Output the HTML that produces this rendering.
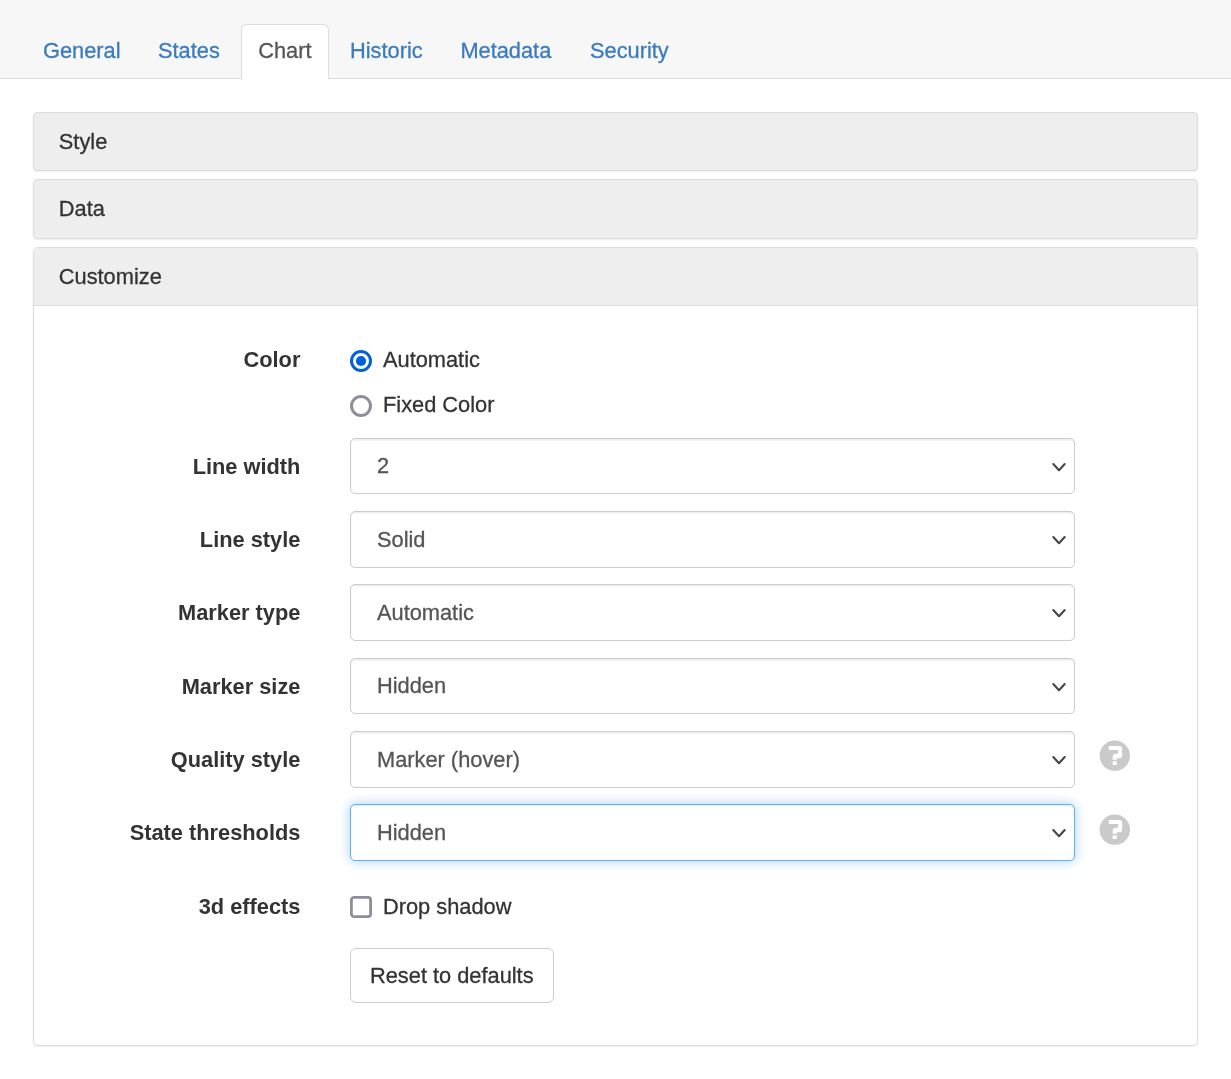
<!DOCTYPE html>
<html>
<head>
<meta charset="utf-8">
<style>
*{box-sizing:border-box;}
html,body{margin:0;padding:0;width:1231px;height:1079px;overflow:hidden;background:#fff;}
body{font-family:"Liberation Sans",sans-serif;font-size:21.8px;color:#333;position:relative;-webkit-text-stroke:0.3px currentColor;}
.abs{position:absolute;}
.tabbar{position:absolute;left:0;top:0;width:1231px;height:79px;background:#f7f7f7;border-bottom:1px solid #ddd;}
.tab{position:absolute;top:0;line-height:1;color:#3a7bbf;white-space:nowrap;}
.tab-active{position:absolute;left:241px;top:24px;width:88px;height:55px;background:#fff;border:1px solid #ddd;border-bottom:none;border-radius:6px 6px 0 0;}
.panel{position:absolute;left:33px;width:1165px;border:1px solid #ddd;border-radius:5px;background:#fff;box-shadow:0 1px 1.5px rgba(0,0,0,.07);}
.ph{background:#eee;border-radius:4px;}
.ptitle{position:absolute;left:24.8px;line-height:1;color:#333;white-space:nowrap;}
.lbl{position:absolute;right:930.6px;-webkit-text-stroke:0;font-weight:bold;line-height:1;white-space:nowrap;color:#333;}
.txt{position:absolute;line-height:1;white-space:nowrap;color:#333;}
.sel{position:absolute;left:350px;width:725px;height:56px;border:1px solid #ccc;border-radius:5px;background:#fff;box-shadow:inset 0 1.5px 1.5px rgba(0,0,0,.08);}
.sel .v{position:absolute;left:26px;top:0;line-height:54px;color:#555;white-space:nowrap;}
.sel svg{position:absolute;left:694px;top:16px;}
.sel[style*="57px"] .v{top:0.6px;}
.focus{border-color:#66afe9;box-shadow:inset 0 1px 2px rgba(0,0,0,.09),0 0 12px rgba(102,175,233,.6);}
.help{position:absolute;left:1094px;}
</style>
</head>
<body><div style="position:absolute;left:0;top:0;width:1231px;height:1079px;will-change:transform;">
<div class="tabbar"></div>
<div class="tab-active"></div>
<div class="tab" style="left:43px;top:40.4px;">General</div>
<div class="tab" style="left:158px;top:40.4px;">States</div>
<div class="tab" style="left:258.2px;top:40.4px;color:#555;">Chart</div>
<div class="tab" style="left:350px;top:40.4px;">Historic</div>
<div class="tab" style="left:460.4px;top:40.4px;">Metadata</div>
<div class="tab" style="left:590px;top:40.4px;">Security</div>

<div class="panel ph" style="top:112px;height:59px;"><div class="ptitle" style="top:17.8px;">Style</div></div>
<div class="panel ph" style="top:179px;height:60px;"><div class="ptitle" style="top:17.8px;">Data</div></div>
<div class="panel" style="top:247px;height:799px;">
  <div class="ph" style="position:absolute;left:0;top:0;right:0;height:58px;border-bottom:1px solid #ddd;border-radius:4px 4px 0 0;"><div class="ptitle" style="top:17.8px;">Customize</div></div>
</div>

<div class="lbl" style="top:349px;">Color</div>
<svg class="abs" style="left:350px;top:350px;" width="22" height="22" viewBox="0 0 22 22"><circle cx="11" cy="11" r="9.5" fill="#fff" stroke="#005fdc" stroke-width="3"/><circle cx="11" cy="11" r="5.1" fill="#0060de"/></svg>
<div class="txt" style="left:383px;top:349px;">Automatic</div>
<svg class="abs" style="left:350px;top:395px;" width="22" height="22" viewBox="0 0 22 22"><circle cx="11" cy="11" r="9.5" fill="#fff" stroke="#8f8d9b" stroke-width="3"/></svg>
<div class="txt" style="left:383px;top:394px;">Fixed Color</div>

<div class="lbl" style="top:456px;">Line width</div>
<div class="sel" style="top:438px;"><span class="v">2</span><svg width="28" height="24" viewBox="0 0 28 24"><path d="M8.3 9 L14 15.2 L19.7 9" fill="none" stroke="#474747" stroke-width="2.1" stroke-linecap="round" stroke-linejoin="round"/></svg></div>
<div class="lbl" style="top:529px;">Line style</div>
<div class="sel" style="top:511px;height:57px;"><span class="v">Solid</span><svg width="28" height="24" viewBox="0 0 28 24"><path d="M8.3 9 L14 15.2 L19.7 9" fill="none" stroke="#474747" stroke-width="2.1" stroke-linecap="round" stroke-linejoin="round"/></svg></div>
<div class="lbl" style="top:602px;">Marker type</div>
<div class="sel" style="top:584px;height:57px;"><span class="v">Automatic</span><svg width="28" height="24" viewBox="0 0 28 24"><path d="M8.3 9 L14 15.2 L19.7 9" fill="none" stroke="#474747" stroke-width="2.1" stroke-linecap="round" stroke-linejoin="round"/></svg></div>
<div class="lbl" style="top:676px;">Marker size</div>
<div class="sel" style="top:658px;"><span class="v">Hidden</span><svg width="28" height="24" viewBox="0 0 28 24"><path d="M8.3 9 L14 15.2 L19.7 9" fill="none" stroke="#474747" stroke-width="2.1" stroke-linecap="round" stroke-linejoin="round"/></svg></div>
<div class="lbl" style="top:749px;">Quality style</div>
<div class="sel" style="top:731px;height:57px;"><span class="v">Marker (hover)</span><svg width="28" height="24" viewBox="0 0 28 24"><path d="M8.3 9 L14 15.2 L19.7 9" fill="none" stroke="#474747" stroke-width="2.1" stroke-linecap="round" stroke-linejoin="round"/></svg></div>
<svg class="help" style="top:736px;" width="40" height="40" viewBox="0 0 40 40"><circle cx="20.8" cy="19.65" r="15.2" fill="#cacaca"/><path d="M14.8 10 H25.3 Q28.1 10 28.1 12.8 V19.4 Q28.1 22.2 25.3 22.2 H22.8 V23.7 H18.7 V20.9 Q18.7 17.8 21.8 17.8 H24.1 V14.1 H14.8 Z M18.7 25.2 H22.8 V28.9 H18.7 Z" fill="#fff"/></svg>
<div class="lbl" style="top:822px;">State thresholds</div>
<div class="sel focus" style="top:804px;height:57px;"><span class="v">Hidden</span><svg width="28" height="24" viewBox="0 0 28 24"><path d="M8.3 9 L14 15.2 L19.7 9" fill="none" stroke="#474747" stroke-width="2.1" stroke-linecap="round" stroke-linejoin="round"/></svg></div>
<svg class="help" style="top:810px;" width="40" height="40" viewBox="0 0 40 40"><circle cx="20.8" cy="19.65" r="15.2" fill="#cacaca"/><path d="M14.8 10 H25.3 Q28.1 10 28.1 12.8 V19.4 Q28.1 22.2 25.3 22.2 H22.8 V23.7 H18.7 V20.9 Q18.7 17.8 21.8 17.8 H24.1 V14.1 H14.8 Z M18.7 25.2 H22.8 V28.9 H18.7 Z" fill="#fff"/></svg>

<div class="lbl" style="top:896px;">3d effects</div>
<svg class="abs" style="left:350px;top:896px;" width="22" height="22" viewBox="0 0 22 22"><rect x="1.4" y="1.4" width="19.2" height="19.2" rx="2.6" fill="#fff" stroke="#8f8d9b" stroke-width="2.8"/></svg>
<div class="txt" style="left:383px;top:896px;">Drop shadow</div>

<div class="abs" style="left:350px;top:948px;width:204px;height:55px;border:1px solid #ccc;border-radius:6px;background:#fff;"><div class="txt" style="left:19px;top:16px;">Reset to defaults</div></div>
</div></body>
</html>
